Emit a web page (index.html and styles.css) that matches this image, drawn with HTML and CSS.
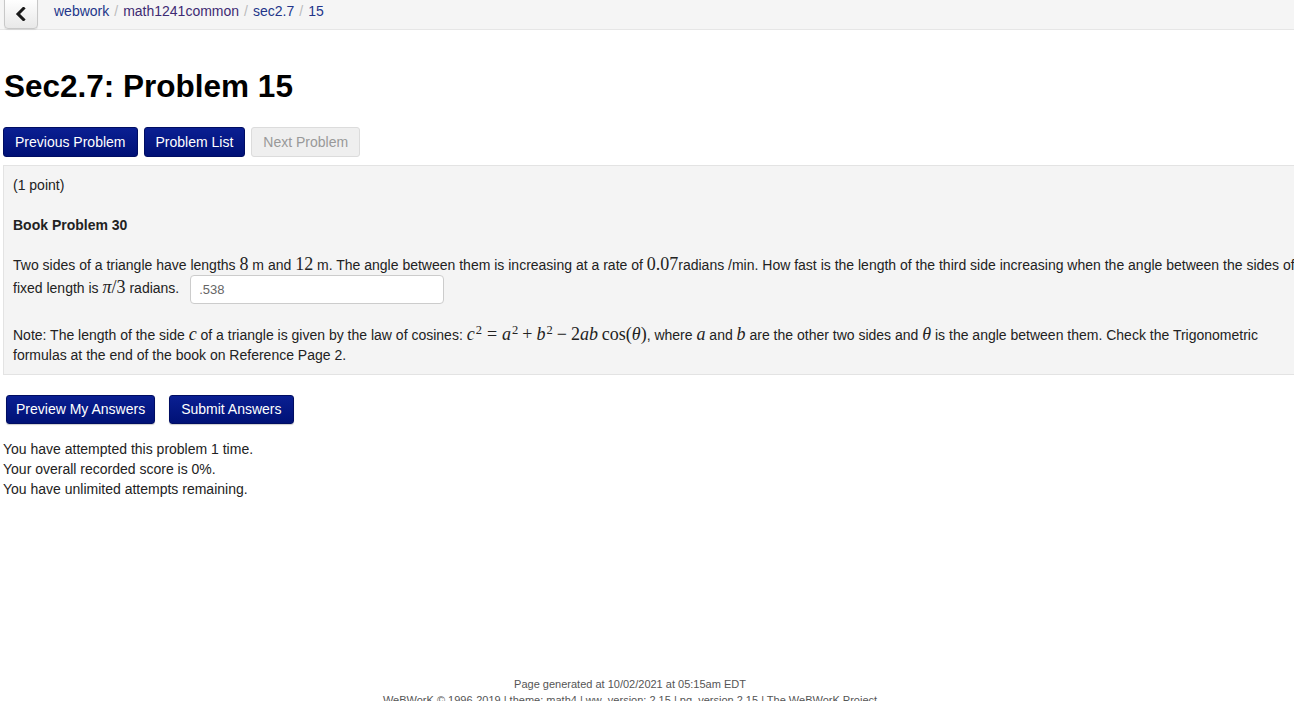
FILE: index.html
```html
<!DOCTYPE html>
<html lang="en">
<head>
    <meta charset="UTF-8">
    <title>Sec2.7: Problem 15</title>
    <link rel="stylesheet" href="styles.css">
</head>
<body>

  <!-- top bar with back button and breadcrumb -->
  <div class="crumbbar">
    <a class="back-btn" href="#" aria-label="back">
      <svg width="12" height="14" viewBox="0 0 12 14"><path d="M8.5 1.5 L3 7 L8.5 12.5" fill="none" stroke="#1a1a1a" stroke-width="3" stroke-linecap="square"/></svg>
    </a>
    <ul class="crumbs">
      <li><a href="#">webwork</a></li>
      <li class="sep">/</li>
      <li><a href="#" class="visited">math1241common</a></li>
      <li class="sep">/</li>
      <li><a href="#">sec2.7</a></li>
      <li class="sep">/</li>
      <li class="active">15</li>
    </ul>
  </div>

  <div class="page">
    <h1>Sec2.7: Problem 15</h1>

    <div class="nav-btns">
      <a href="#" class="nav-btn">Previous Problem</a>
      <a href="#" class="nav-btn">Problem List</a>
      <span class="nav-btn disabled">Next Problem</span>
    </div>

    <div class="problem">
      <div class="line">(1 point)</div>
      <div class="line gap"><b>Book Problem 30</b></div>
      <div class="line gap with-input">Two sides of a triangle have lengths <span class="mn">8</span> m and <span class="mn">12</span> m. The angle between them is increasing at a rate of <span class="mn">0.07</span>radians /min. How fast is the length of the third side increasing when the angle between the sides of fixed length is <span class="mi">π</span><span class="mn">/3</span> radians. <input class="answer" type="text" value=".538"></div>
      <div class="line gap">Note: The length of the side <span class="mi">c</span> of a triangle is given by the law of cosines: <span class="mi">c</span><sup class="mn">2</sup><span class="mo rel">=</span><span class="mi">a</span><sup class="mn">2</sup><span class="mo">+</span><span class="mi">b</span><sup class="mn">2</sup><span class="mo">−</span><span class="mn">2</span><span class="mi">ab</span> <span class="mn">cos(</span><span class="mi">θ</span><span class="mn">)</span>, where <span class="mi">a</span> and <span class="mi">b</span> are the other two sides and <span class="mi">θ</span> is the angle between them. Check the Trigonometric formulas at the end of the book on Reference Page 2.</div>
    </div>

    <div class="submit-btns">
      <button class="sub-btn">Preview My Answers</button>
      <button class="sub-btn wide">Submit Answers</button>
    </div>

    <div class="attempts">
      You have attempted this problem 1 time.<br>
      Your overall recorded score is 0%.<br>
      You have unlimited attempts remaining.
    </div>
  </div>

  <div class="footer">
    <div>Page generated at 10/02/2021 at 05:15am EDT</div>
    <div>WeBWorK © 1996-2019 | theme: math4 | ww_version: 2.15 | pg_version 2.15 | The WeBWorK Project</div>
  </div>

</body>
</html>
```

FILE: styles.css
```css
*{
   margin:0;
   padding:0;
   box-sizing: border-box;
}
html{
   overflow-x: hidden;
}
body{
   font-family: "Liberation Sans", Arial, Helvetica, sans-serif;
   font-size: 14px;
   line-height: 20px;
   color: #222;
   background: #fff;
   width: 1340px;
}
a{
   text-decoration: none;
}

/* breadcrumb bar */
.crumbbar{
   display: flex;
   align-items: stretch;
   height: 30px;
   background-color: #f5f5f5;
   border-bottom: 1px solid #e6e6e6;
}
.back-btn{
   display: flex;
   align-items: center;
   justify-content: center;
   width: 34px;
   margin-left: 4px;
   margin-top: -2px;
   height: 31px;
   background: linear-gradient(#ffffff, #e8e8e8);
   border: 1px solid #c8c8c8;
   border-radius: 0 0 4px 4px;
   box-shadow: 0 1px 1px rgba(0,0,0,0.08);
}
.crumbs{
   display: flex;
   list-style: none;
   margin-left: 16px;
   padding-top: 1px;
   line-height: 20px;
}
.crumbs a{
   color: #23358a;
}
.crumbs a.visited{
   color: #3e2b73;
}
.crumbs .sep{
   color: #bbb;
   padding: 0 5px;
}
.crumbs .active{
   color: #23358a;
}

/* main column */
.page{
   padding-left: 3px;
}
h1{
   margin-top: 39px;
   margin-left: 1px;
   font-size: 31.5px;
   line-height: 35px;
   font-weight: bold;
   color: #000;
}
.nav-btns{
   display: flex;
   gap: 6px;
   margin-top: 23px;
}
.nav-btn{
   display: inline-block;
   padding: 4px 11px;
   line-height: 20px;
   font-size: 14px;
   color: #fff;
   background: linear-gradient(#0a1f92, #001176);
   border: 1px solid #000d62;
   border-radius: 3px;
}
.nav-btn.disabled{
   color: #999;
   background: #efefef;
   border-color: #dcdcdc;
}

/* problem box */
.problem{
   margin-top: 8px;
   width: 1306px;
   padding: 9px 9px 9px 9px;
   background-color: #f4f4f4;
   border: 1px solid #e3e3e3;
   border-right: none;
}
.line.gap{
   margin-top: 20px;
}
.line.with-input{
   padding-bottom: 1px;
}
.mn,
.mo{
   font-family: "Liberation Serif", "Times New Roman", serif;
   font-size: 18px;
   line-height: 12px;
}
.mi{
   font-family: "Liberation Serif", "Times New Roman", serif;
   font-style: italic;
   font-size: 18px;
   line-height: 12px;
}
.mo{
   padding: 0 4px;
}
.mo.rel{
   padding: 0 5px;
}
sup.mn{
   font-size: 12.5px;
   vertical-align: 6px;
   line-height: 0;
   padding-left: 1px;
}
.answer{
   width: 254px;
   height: 29px;
   margin: 0 0 0 7px;
   padding: 4px 8px;
   font-family: "Liberation Sans", Arial, sans-serif;
   font-size: 13px;
   color: #666;
   background: #fff;
   border: 1px solid #ccc;
   border-radius: 4px;
   vertical-align: middle;
}

/* submit row */
.submit-btns{
   display: flex;
   gap: 14px;
   margin-top: 20px;
   margin-left: 3px;
}
.sub-btn{
   padding: 4px 9px;
   line-height: 19px;
   font-family: "Liberation Sans", Arial, sans-serif;
   font-size: 14px;
   color: #fff;
   background: linear-gradient(#0a1f92, #001176);
   border: 1px solid #000d62;
   border-radius: 3px;
   box-shadow: 0 1px 1px rgba(0,0,0,0.2);
}
.sub-btn.wide{
   padding: 4px 11px;
}
.attempts{
   margin-top: 15px;
}

/* footer */
.footer{
   width: 1260px;
   margin-top: 177px;
   text-align: center;
   font-size: 11px;
   line-height: 16px;
   color: #555;
}
```
